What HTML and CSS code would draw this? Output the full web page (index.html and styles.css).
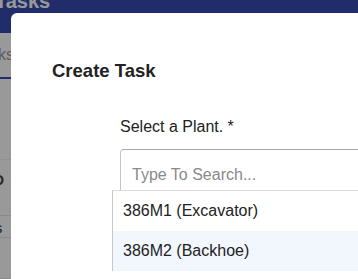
FILE: index.html
```html
<!DOCTYPE html>
<html lang="en">
<head>
    <meta charset="UTF-8">
    <meta name="viewport" content="width=device-width, initial-scale=1.0">
    <title>Create Task</title>
    <link rel="stylesheet" href="styles.css">
</head>
<body>
    <div class="page">
        <header class="topbar">
            <h1 class="page-title">Tasks</h1>
        </header>
        <nav class="tabs">
            <span class="tab active">Tasks</span>
        </nav>
        <div class="grid">
            <div class="grid-row grid-spacer"></div>
            <div class="grid-row grid-head">ID</div>
            <div class="grid-row">Tasks</div>
            <div class="grid-row"></div>
        </div>
    </div>

    <div class="overlay"></div>

    <div class="modal">
        <h2 class="modal-title">Create Task</h2>
        <div class="field">
            <label for="plant">Select a Plant. *</label>
            <div class="combo">
                <input type="text" id="plant" placeholder="Type To Search...">
                <ul class="options">
                    <li>386M1 (Excavator)</li>
                    <li class="active">386M2 (Backhoe)</li>
                </ul>
            </div>
        </div>
    </div>
</body>
</html>
```

FILE: styles.css
```css
body {
    font-family: 'Liberation Sans', Arial, sans-serif;
    margin: 0;
    width: 358px;
    height: 279px;
    overflow: hidden;
    background-color: #fff;
    color: #222;
}
.page {
    margin-left: -40px;
}
.topbar {
    height: 33px;
    background-color: #374ab1;
    overflow: hidden;
}
.page-title {
    margin: -11px 0 0 35px;
    font-size: 20px;
    line-height: 24px;
    font-weight: bold;
    color: #fff;
}
.tabs {
    height: 44px;
    border-bottom: 2px solid #374ab1;
    display: flex;
    align-items: center;
    padding-left: 13px;
}
.tab {
    font-size: 16px;
    color: #999;
}
.grid-row {
    font-size: 15px;
    padding-left: 28px;
    border-bottom: 1px solid #e6e6e6;
    display: flex;
    align-items: center;
}
.grid-spacer {
    height: 80px;
    border-bottom-color: #f2f2f2;
}
.grid-head {
    height: 44px;
    padding-top: 11px;
    align-items: flex-start;
    font-weight: bold;
    color: #444;
    padding-left: 29px;
    line-height: 17px;
}
.grid-row:nth-child(3) {
    height: 21px;
    color: #333;
    padding-left: 4px;
    padding-top: 2px;
    box-sizing: border-box;
    height: 22px;
}
.grid-row:nth-child(4) {
    height: 40px;
}
.overlay {
    position: absolute;
    inset: 0;
    background: rgba(0,0,0,0.4);
}
.modal {
    position: absolute;
    left: 11px;
    top: 13px;
    width: 420px;
    height: 320px;
    background: #fff;
    border-radius: 6px;
    padding: 47px 0 0 41px;
    box-sizing: border-box;
}
.modal-title {
    margin: 0;
    font-size: 18.5px;
    line-height: 22px;
    font-weight: bold;
    color: #222;
}
.field {
    margin: 35px 0 0 68px;
}
label {
    display: block;
    font-size: 16px;
    line-height: 20px;
    margin-bottom: 12px;
}
.combo {
    position: relative;
    width: 300px;
}
input[type="text"] {
    width: 100%;
    height: 52px;
    box-sizing: border-box;
    border: 1px solid #c4c4c4;
    border-top-color: #a9a9a9;
    border-radius: 4px;
    padding: 0 11px;
    font-family: inherit;
    font-size: 16px;
    color: #222;
}
input::placeholder {
    color: #8a8a8a;
}
.options {
    position: absolute;
    top: 41px;
    left: -8px;
    width: 320px;
    margin: 0;
    padding: 0;
    list-style: none;
    background: #fff;
    border-top: 1px solid #dcdcdc;
    border-left: 1px solid #c8c8c8;
}
.options li {
    height: 40px;
    line-height: 40px;
    padding: 0 10px;
    font-size: 16px;
    color: #222;
}
.options li.active {
    background-color: #f2f6fd;
}
```
